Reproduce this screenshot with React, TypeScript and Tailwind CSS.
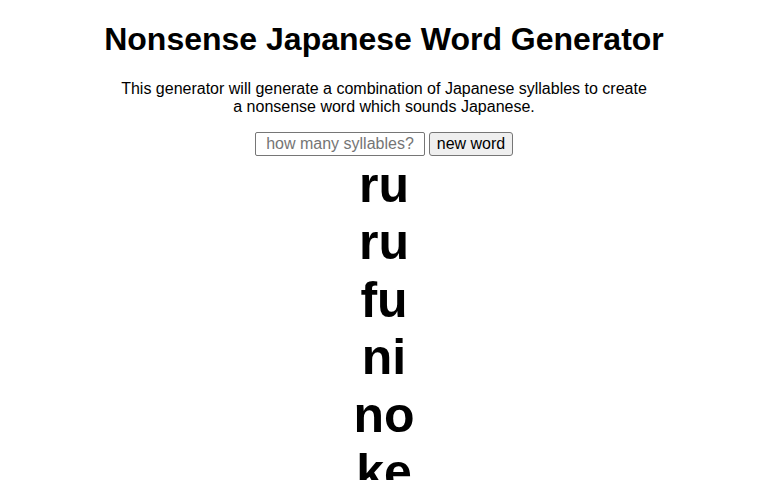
import React, { useState } from 'react';

const SYLLABLES = ['ru', 'ru', 'fu', 'ni', 'no', 'ke'];

const App: React.FC = () => {
  const [count, setCount] = useState('');
  const [word] = useState<string[]>(SYLLABLES);

  return (
    <div className="min-h-screen bg-white text-black text-center font-['Liberation_Sans',Arial,sans-serif]">
      <h1 className="pt-[21px] mb-[22px] text-[32px] font-bold leading-[1.15]">
        Nonsense Japanese Word Generator
      </h1>
      <p className="mx-auto max-w-[532px] text-base leading-[1.15] mb-[15px]">
        This generator will generate a combination of Japanese syllables to create a nonsense word which sounds Japanese.
      </p>
      <div className="flex justify-center gap-1">
        <input
          value={count}
          onChange={e => setCount(e.target.value)}
          placeholder="how many syllables?"
          className="w-[170px] h-6 px-[2px] text-base text-center border border-[#767676] rounded-[2px] placeholder:text-[#757575] outline-none"
        />
        <button className="w-[84px] h-6 text-base leading-none bg-[#efefef] border border-[#767676] rounded-[3px]">
          new word
        </button>
      </div>
      <div className="mt-[1px] text-[50px] font-bold leading-[1.15]">
        {word.map((s, i) => (
          <div key={i}>{s}</div>
        ))}
      </div>
    </div>
  );
};

export default App;
